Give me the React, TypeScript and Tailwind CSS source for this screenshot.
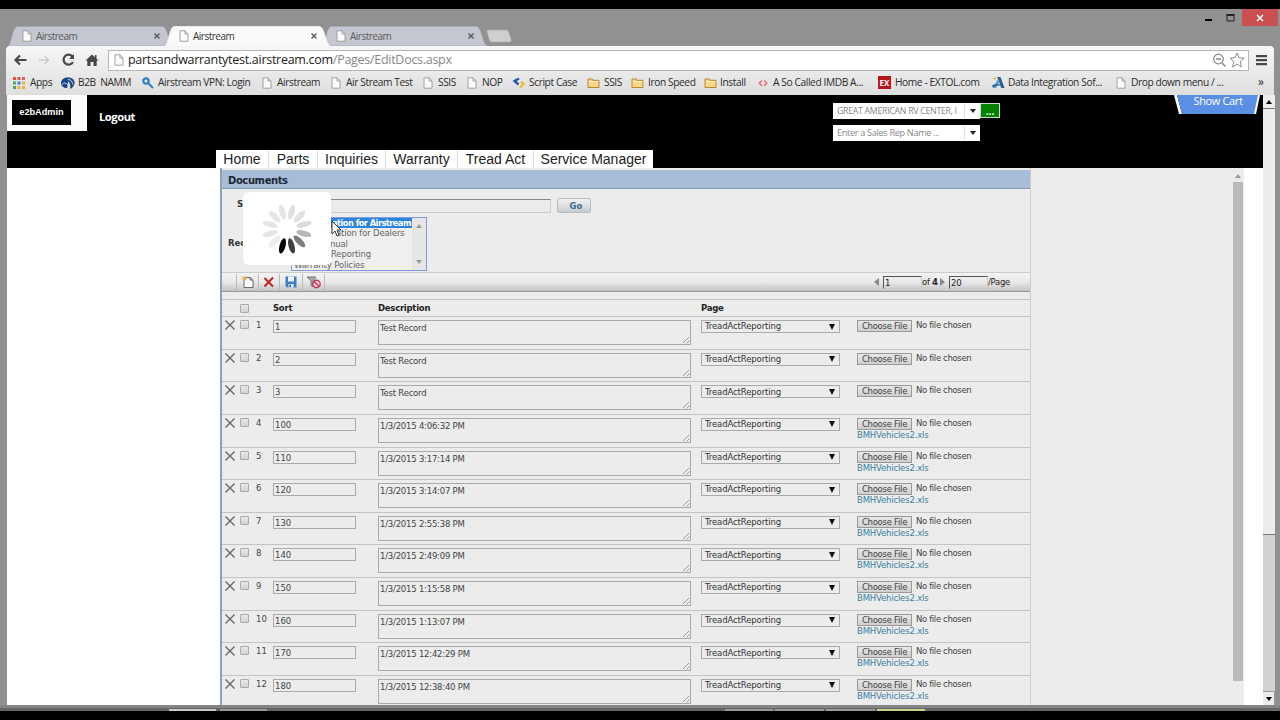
import { ReactNode } from "react";

const UI = "font-['Open_Sans','Noto_Sans',sans-serif]";
const ARIAL = "font-['Liberation_Sans',Arial,sans-serif]";
const VERDANA = "font-['DejaVu_Sans',Verdana,sans-serif]";

const PageIcon = () => (
  <svg viewBox="0 0 10 12" className="h-3 w-2.5 shrink-0">
    <path d="M1 .8h5L9 4v7.2H1z" fill="#fafafa" stroke="#999" strokeWidth=".9" />
    <path d="M6 .8V4h3" fill="none" stroke="#999" strokeWidth=".9" />
  </svg>
);

const FolderIcon = () => (
  <svg viewBox="0 0 13 12" className="h-3 w-[13px]">
    <path d="M1 10.5V2h4.5v1.3H12v7.2z" fill="#fbd588" stroke="#b98732" />
    <path d="M2 4.5h9.3" stroke="#fff0c6" />
  </svg>
);

const AppsIcon = () => (
  <svg viewBox="0 0 12 12" className="size-3">
    <path d="M0 0h3v3H0z" fill="#e2504b" />
    <path d="M4.5 0h3v3h-3z" fill="#e2504b" />
    <path d="M9 0h3v3H9z" fill="#e0645c" />
    <path d="M0 4.5h3v3H0z" fill="#4fa65b" />
    <path d="M4.5 4.5h3v3h-3z" fill="#3c83dd" />
    <path d="M9 4.5h3v3H9z" fill="#eeb63a" />
    <path d="M0 9h3v3H0z" fill="#4fa65b" />
    <path d="M4.5 9h3v3h-3z" fill="#eeb63a" />
    <path d="M9 9h3v3H9z" fill="#eeb63a" />
  </svg>
);

const NammIcon = () => (
  <svg viewBox="0 0 14 12" className="h-3 w-3.5">
    <path d="M0 6C0 2 4 0 8 .5c4 .5 6 3 5.500 6C13 9 11 11.500 9 12c1-3 0-6-2-8 0 3-.5 5-1 7C3 11 0 9 0 6z" fill="#1c4687" />
    <path d="M1 7.500c2-2 4-2 6 .5M7 2.500c3 0 4.500 2 4.500 5" fill="none" stroke="#e6eefa" strokeWidth=".9" />
  </svg>
);

const KeyIcon = () => (
  <svg viewBox="0 0 12 12" className="size-3">
    <circle cx="4" cy="4" r="2.7" fill="none" stroke="#2f7fc2" strokeWidth="2.2" />
    <path d="M6 6l5 5M8 9.5L9.5 8" stroke="#2f7fc2" strokeWidth="2" />
  </svg>
);

const ScriptCaseIcon = () => (
  <svg viewBox="0 0 13 12" className="h-3 w-[13px]">
    <path d="M6 1.500L1.500 4 5.500 7.500" fill="none" stroke="#2459a8" strokeWidth="2.4" />
    <path d="M8 4.500L10.500 7 7 10.500" fill="none" stroke="#edbd38" strokeWidth="2.4" />
  </svg>
);

const CodeIcon = () => (
  <svg viewBox="0 0 10 12" className="h-3 w-2.5">
    <path d="M4 3.5L1.3 6.2 4 9M6 3.5l2.7 2.7L6 9" fill="none" stroke="#e2747c" strokeWidth="1.7" />
  </svg>
);

const ExtolIcon = () => (
  <span className="flex size-[13px] items-center justify-center bg-[#b3171c] text-[8px] font-bold leading-none text-white">
    EX
  </span>
);

const IntegrationIcon = () => (
  <svg viewBox="0 0 13 13" className="size-[13px]">
    <path d="M5 1h3.5l4 11H9.2L6.5 4z" fill="#245f8d" />
    <path d="M5.5 3l-4 9H4l3-6z" fill="#4aa3c7" />
    <path d="M0 9.5c3-2 7-1.500 9-1l.5 1.500C6 9 3 10 1 12z" fill="#2d6b99" />
    <path d="M1 2l3-.5-1 3z" fill="#f0a531" />
  </svg>
);

const bookmarks: { label: string; icon: ReactNode; width: string; gap: string }[] = [
  { label: "Apps", icon: <AppsIcon />, width: "w-[48px]", gap: "w-[17px]" },
  { label: "B2B  NAMM", icon: <NammIcon />, width: "w-[81px]", gap: "w-[17px]" },
  { label: "Airstream VPN: Login", icon: <KeyIcon />, width: "w-[120px]", gap: "w-[16px]" },
  { label: "Airstream", icon: <PageIcon />, width: "w-[69px]", gap: "w-[15px]" },
  { label: "Air Stream Test", icon: <PageIcon />, width: "w-[92px]", gap: "w-[15px]" },
  { label: "SSIS", icon: <PageIcon />, width: "w-[44px]", gap: "w-[15px]" },
  { label: "NOP", icon: <PageIcon />, width: "w-[46px]", gap: "w-[15px]" },
  { label: "Script Case", icon: <ScriptCaseIcon />, width: "w-[74px]", gap: "w-[16px]" },
  { label: "SSIS", icon: <FolderIcon />, width: "w-[44px]", gap: "w-[17px]" },
  { label: "Iron Speed", icon: <FolderIcon />, width: "w-[73px]", gap: "w-[17px]" },
  { label: "Install", icon: <FolderIcon />, width: "w-[54px]", gap: "w-[16px]" },
  { label: "A So Called IMDB A...", icon: <CodeIcon />, width: "w-[120px]", gap: "w-[15px]" },
  { label: "Home - EXTOL.com", icon: <ExtolIcon />, width: "w-[114px]", gap: "w-[17px]" },
  { label: "Data Integration Sof...", icon: <IntegrationIcon />, width: "w-[124px]", gap: "w-[16px]" },
  { label: "Drop down menu / ...", icon: <PageIcon />, width: "w-[140px]", gap: "w-[15px]" },
];

const BrowserTab = ({ active }: { active?: boolean }) => (
  <div className={`relative -mr-2 h-5 w-[165px] shrink-0 ${active ? "z-10" : ""}`}>
    <svg viewBox="0 0 165 20" className="absolute inset-0 h-full w-full">
      <path
        d="M0 20C4 18 4 2 9 .5H154C160 .5 160 17 165 20z"
        fill={active ? "#fafafa" : "#c5c7d0"}
        stroke={active ? "#f5f5f5" : "#a9abb2"}
        strokeWidth=".8"
      />
    </svg>
    <div className="relative flex h-full items-center pl-3.5">
      <PageIcon />
      <span
        className={`ml-1 flex-1 text-[10px] leading-none tracking-[-0.5px] ${active ? "text-[#333]" : "text-[#5a5a5a]"}`}
      >
        Airstream
      </span>
      <svg viewBox="0 0 6 6" className="mr-[13px] size-1.5">
        <path d="M.5 .5l5 5M5.500 .5l-5 5" stroke="#555" strokeWidth="1.3" />
      </svg>
    </div>
  </div>
);

const Browser = () => (
  <div className={UI}>
    <div className="flex h-[37px] items-end bg-[#919191] pl-2">
      <BrowserTab />
      <BrowserTab active />
      <BrowserTab />
      <svg viewBox="0 0 26 14" className="mb-[3px] ml-[7px] h-3.5 w-[26px]">
        <path
          d="M3 1h17c2 0 2 1 3 3l2 6c.5 2 0 3-2 3H6c-2 0-2-1-3-3L1 3C.5 2 1 1 3 1z"
          fill="#cfcfcf"
          stroke="#aaa"
          strokeWidth=".7"
        />
      </svg>
      <div className="ml-auto mr-0.5 flex h-[37px] items-start">
        <svg viewBox="0 0 40 16" className="h-4 w-10">
          <path d="M3 10h7v2H3z" />
          <path d="M25 6h7v6h-7z" fill="none" stroke="#222" />
          <path d="M24.5 6h8" stroke="#222" strokeWidth="2" />
        </svg>
        <div className="flex h-[17px] w-9 items-center justify-center bg-[#c94f50]">
          <svg viewBox="0 0 8 8" className="size-2">
            <path d="M1 1l6 6M7 1L1 7" stroke="#fff" strokeWidth="1.5" />
          </svg>
        </div>
      </div>
    </div>
    <div className="mx-1.5 h-[49px] rounded-t-sm bg-gradient-to-b from-[#f7f7f7] to-[#dedede]">
      <div className="flex h-[26px] items-center pt-0.5">
        <svg viewBox="0 0 96 16" className="ml-1.5 h-4 w-24" fill="none" stroke="#484848" strokeWidth="2.2">
          <path d="M14.5 8H4M8 3.5L3.5 8 8 12.5" />
          <path d="M27 8h9M32.5 4l4 4-4 4" stroke="#c9c9c9" strokeWidth="1.5" />
          <path d="M60.5 4.5A5 5 0 1 0 61 10" />
          <path d="M62 2v5h-5z" fill="#484848" stroke="none" />
          <path
            d="M80 2.5l-6.500 6h1.800V14h3.200v-4h3v4h3.200V8.500h1.800l-2-2V3H83v2.300z"
            fill="#484848"
            stroke="none"
          />
        </svg>
        <div className="flex h-[21px] w-[1141px] items-center border border-[#b5b5b5] bg-white pl-[5px]">
          <PageIcon />
          <span className="ml-1 text-[12.5px] leading-none tracking-[-0.28px] text-[#222]">
            partsandwarrantytest.airstream.com<span className="text-[#888]">/Pages/EditDocs.aspx</span>
          </span>
          <svg viewBox="0 0 34 16" className="ml-auto mr-0.5 h-4 w-[34px]" fill="none" stroke="#8b8b8b">
            <circle cx="6.5" cy="7" r="4.800" strokeWidth="1.3" />
            <path d="M4 7h5M10 11l3.500 3.500" strokeWidth="1.5" />
            <path d="M25 1l2 4.700 5 .4-3.800 3.400L29.400 15 25 12l-4.400 3 1.200-5.500L18 6.100l5-.4z" />
          </svg>
        </div>
        <svg viewBox="0 0 12 12" className="ml-[7px] size-3">
          <path d="M0 1h11v2.200H0zM0 5h11v2.200H0zM0 9h11v2.200H0z" fill="#484848" />
        </svg>
      </div>
      <div className="flex h-[21px] items-center pl-[7px] text-[10.2px] leading-none text-[#2c2c2c]">
        {bookmarks.map((b, i) => (
          <div key={i} className={`flex shrink-0 items-center whitespace-pre ${b.width}`}>
            <span className={`shrink-0 ${b.gap}`}>{b.icon}</span>
            <span className="tracking-[-0.4px]">{b.label}</span>
          </div>
        ))}
        <span className="pb-0.5 pl-0.5 text-[12px]">»</span>
      </div>
    </div>
  </div>
);

const Caret = ({ className = "" }: { className?: string }) => (
  <svg viewBox="0 0 6 4" className={`h-1 w-1.5 ${className}`}>
    <path d="M0 0h6L3 4z" fill="currentColor" />
  </svg>
);

const Combo = ({ text, className }: { text: string; className: string }) => (
  <div className="flex h-4 w-[147px] items-center bg-white text-[#888]">
    <span className={`w-[132px] whitespace-nowrap border-r border-[#ddd] pl-1 ${className}`}>{text}</span>
    <Caret className="mx-auto text-[#222]" />
  </div>
);

const navItems = [
  { label: "Home", width: "w-[53px]" },
  { label: "Parts", width: "w-[49px]" },
  { label: "Inquiries", width: "w-[68px]" },
  { label: "Warranty", width: "w-[72px]" },
  { label: "Tread Act", width: "w-[76px]" },
  { label: "Service Manager", width: "w-[119px]" },
];

const SiteHeader = () => (
  <div className={`h-[73px] bg-black text-white ${ARIAL}`}>
    <div className="flex h-[55px]">
      <div className="h-9 w-20 bg-[#fcfcfc] pl-[5px] pt-[5px]">
        <div className="flex h-[25px] w-[59px] items-center justify-center bg-black text-[9.2px] font-bold">e2bAdmin</div>
      </div>
      <div className={`ml-3 mt-[15px] w-[734px] text-[11.2px] font-bold leading-[13px] tracking-[-0.45px] ${UI}`}>
        Logout
      </div>
      <div className={`flex flex-col gap-[6px] pt-2 leading-[14px] ${UI}`}>
        <div className="flex">
          <Combo text="GREAT AMERICAN RV CENTER, I" className="text-[8.8px] tracking-[-0.3px]" />
          <div className="flex h-[15px] w-5 items-center justify-center border border-[#c8e0c8] bg-[#048204] text-[10px] font-bold">
            ...
          </div>
        </div>
        <Combo text="Enter a Sales Rep Name ..." className="text-[9.1px] tracking-[-0.3px]" />
      </div>
      <div className="relative ml-auto mr-px h-[19px] w-[88px] text-[11px] tracking-[-0.35px]">
        <svg viewBox="0 0 88 19" className="absolute inset-0 h-full w-full">
          <path d="M0 0h3l5 19H5z" fill="#fff" />
          <path d="M3 0h82l-4 19H8z" fill="#5b8fe6" />
          <path d="M84 0h2l-4 19h-2z" fill="#fff" />
        </svg>
        <span className={`relative block text-center leading-[12px] ${UI}`}>Show Cart</span>
      </div>
    </div>
    <div className="ml-[209px] flex w-[437px] bg-white text-[14px] leading-[18px] text-[#222]">
      {navItems.map((n) => (
        <div key={n.label} className={`border-r border-[#ddd] text-center last:border-0 ${n.width}`}>
          {n.label}
        </div>
      ))}
    </div>
  </div>
);

// opacity of each spoke, clockwise from one o'clock
const SPOKES = [0.12, 0.12, 0.14, 0.28, 0.5, 0.75, 0.98, 0.08, 0.1, 0.1, 0.1, 0.1];

const Spinner = () => (
  <div className="absolute left-[21px] top-[24px] flex h-[73px] w-[88px] items-center justify-center rounded-md bg-white">
    <svg viewBox="-27 -27 54 54" className="size-[54px]">
      {SPOKES.map((o, i) => (
        <ellipse key={i} cy="-17.5" rx="3" ry="7.800" fillOpacity={o} transform={`rotate(${15 + i * 30})`} />
      ))}
    </svg>
  </div>
);

const Cursor = () => (
  <svg viewBox="0 0 11 17" className="absolute left-[109px] top-[52px] h-[17px] w-[11px]">
    <path d="M1 1v13l3-3 2 5 2-1-2-5h4z" fill="#fff" stroke="#222" strokeWidth=".9" />
  </svg>
);

const records = [
  { label: "ation for Dealers", indent: "pl-[44px]" },
  { label: "nual", indent: "pl-[38px]" },
  { label: "Reporting", indent: "pl-[39px]" },
  { label: "Warranty Policies", indent: "pl-[2px]" },
];

const Filters = () => (
  <div className="h-[83px] text-[#333]">
    <div className="flex h-[27px] items-center">
      <span className="w-[69px] pl-[15px] pt-1 font-bold">S</span>
      <div className="mt-1.5 h-3.5 w-[260px] border border-[#ccc] border-t-[#888] bg-[#ebebeb]" />
      <button className="ml-1.5 mt-1.5 h-[15px] w-[34px] rounded-xs border border-[#bbb] bg-gradient-to-b from-[#f2f2f2] to-[#c9cccf] pl-1 text-[8.5px] font-bold leading-[14px] text-[#3a6d92]">
        Go
      </button>
    </div>
    <div className="flex h-[55px] items-center">
      <span className="w-[69px] pl-[6px] font-bold">Rec</span>
      <div className="flex h-[54px] w-[136px] border border-[#7f9be0] bg-[#efefef]">
        <div className="w-[120px] text-[8.5px] leading-[10.6px] text-[#666]">
          <div className="bg-[#2a84dc] pr-px text-right text-[8.3px] font-bold tracking-[-0.55px] text-white">
            ation for Airstream
          </div>
          {records.map((r) => (
            <div key={r.label} className={`whitespace-nowrap tracking-[-0.15px] ${r.indent}`}>
              {r.label}
            </div>
          ))}
        </div>
        <div className="flex flex-1 flex-col items-center justify-between bg-[#e6e6e6] py-1.5 text-[#999]">
          <Caret className="rotate-180" />
          <Caret />
        </div>
      </div>
    </div>
  </div>
);

const Divider = () => <span className="h-4 w-px bg-[#bbb]" />;

const Toolbar = () => (
  <div className="flex h-5 items-center border-b border-t border-b-[#999] border-t-[#ccc] bg-gradient-to-b from-[#f3f3f3] via-[#e9e9e9] to-[#c4c4c4] pl-[14px]">
    <Divider />
    <svg viewBox="0 0 12 12" className="ml-[5px] mr-1 size-3">
      <path d="M2 1.500h6L11 4v7.500H2z" fill="#fff" stroke="#666" />
      <path d="M8 1.500V4h3" fill="none" stroke="#666" />
      <circle cx="2.5" cy="2.5" r="2.2" fill="#eab35a" />
    </svg>
    <Divider />
    <svg viewBox="0 0 12 12" className="mx-1 size-3">
      <path d="M1.500 2l8.500 8.500M10 1.500l-8.500 9" stroke="#c02020" strokeWidth="1.9" />
    </svg>
    <Divider />
    <svg viewBox="0 0 12 12" className="mx-[5px] size-3">
      <path d="M.5 .5h11v11H2L.5 10z" fill="#3e7cc4" />
      <path d="M3 .5h6v5H3zM3.500 8h5v3.500h-5z" fill="#edf3fa" />
      <path d="M4.500 8.500H6V11H4.500z" fill="#29568c" />
    </svg>
    <Divider />
    <svg viewBox="0 0 15 13" className="mx-[3px] h-[13px] w-[15px]">
      <path d="M1 1h9L7 5v6L5 9.500V5z" fill="#aaa" stroke="#777" />
      <circle cx="10.5" cy="8" r="3.700" fill="#f5d5dd" stroke="#c2355b" strokeWidth="1.4" />
      <path d="M8 5.500l5 5" stroke="#c2355b" strokeWidth="1.4" />
    </svg>
    <Divider />
    <div className="ml-auto mr-5 flex items-center text-[8.5px] tracking-[-0.3px] text-[#222]">
      <svg viewBox="0 0 5 8" className="h-2 w-[5px]">
        <path d="M5 0v8L0 4z" fill="#888" />
      </svg>
      <span className="ml-1 h-[13px] w-[39px] border border-[#ccc] border-l-[#555] border-t-[#555] pl-px leading-[13px]">1</span>
      <span className="w-[18px] whitespace-nowrap">
        of <b>4</b>
      </span>
      <svg viewBox="0 0 5 8" className="h-2 w-[5px]">
        <path d="M0 0v8l5-4z" fill="#888" />
      </svg>
      <span className="ml-1 h-[13px] w-[39px] border border-[#ccc] border-l-[#555] border-t-[#555] pl-px leading-[13px]">20</span>
      <span>/Page</span>
    </div>
  </div>
);

const rows = [
  ["1", "Test Record"],
  ["2", "Test Record"],
  ["3", "Test Record"],
  ["100", "1/3/2015 4:06:32 PM"],
  ["110", "1/3/2015 3:17:14 PM"],
  ["120", "1/3/2015 3:14:07 PM"],
  ["130", "1/3/2015 2:55:38 PM"],
  ["140", "1/3/2015 2:49:09 PM"],
  ["150", "1/3/2015 1:15:58 PM"],
  ["160", "1/3/2015 1:13:07 PM"],
  ["170", "1/3/2015 12:42:29 PM"],
  ["180", "1/3/2015 12:38:40 PM"],
];

const Checkbox = () => (
  <span className="block size-[9px] rounded-[1px] border border-[#aaa] bg-gradient-to-b from-[#e8e8e8] to-[#d2d2d2]" />
);

const COLS = "grid grid-cols-[18px_16px_17px_105px_323px_156px_1fr]";

const DocumentRow = ({ index, sort, text }: { index: number; sort: string; text: string }) => (
  <div className={`h-[32.64px] border-t border-[#c4c4c4] pt-[3px] text-[#444] ${COLS}`}>
    <svg viewBox="0 0 10 10" className="ml-[3px] size-2.5">
      <path d="M.5 .5l9 9M9.500 .5l-9 9" stroke="#666" strokeWidth="1.4" />
    </svg>
    <Checkbox />
    <span className="leading-[11px]">{index}</span>
    <div className="h-[13px] w-[83px] border border-[#aaa] pl-px leading-[13px]">{sort}</div>
    <div className="relative h-[25px] w-[313px] border border-[#aaa] pl-px pt-0.5 leading-[11px] tracking-[-0.22px]">
      {text}
      <svg viewBox="0 0 8 8" className="absolute bottom-0 right-0 size-2">
        <path d="M1 7l6-6M4.500 7.500l3-3" stroke="#888" strokeWidth=".8" />
      </svg>
    </div>
    <div className="flex h-[13px] w-[139px] items-center justify-between border border-[#aaa] pl-[3px] pr-[4px] leading-none tracking-[-0.12px] text-[#333]">
      <span>TreadActReporting</span>
      <svg viewBox="0 0 6 6" className="size-1.5">
        <path d="M0 0h6L3 6z" fill="#111" />
      </svg>
    </div>
    <div>
      <div className="flex gap-1">
        <button className="h-3 w-[55px] whitespace-nowrap border border-[#999] bg-gradient-to-b from-[#e8e8e8] to-[#cfcfcf] leading-[10px] tracking-[-0.28px]">
          Choose File
        </button>
        <span className="leading-[11px] tracking-[-0.35px]">No file chosen</span>
      </div>
      {index > 3 && <a className="block leading-[10px] tracking-[-0.18px] text-[#3a7f9f]">BMHVehicles2.xls</a>}
    </div>
  </div>
);

const Documents = () => (
  <div
    className={`relative h-full w-[811px] overflow-hidden border-l-2 border-r border-l-[#8aa5ad] border-r-[#ccc] bg-[#ececec] text-[8.5px] ${VERDANA}`}
  >
    <div className="mt-0.5 h-[19px] border-b border-[#8a9ab0] bg-[#a6bcd9] pl-1.5 text-[10px] font-bold leading-[21px] tracking-[-0.4px] text-[#1c2836]">
      Documents
    </div>
    <Filters />
    <Toolbar />
    <div className="h-[7px]" />
    <div className={`h-[17px] items-center border-t border-[#c4c4c4] font-bold tracking-[-0.25px] text-[#222] ${COLS}`}>
      <span />
      <Checkbox />
      <span />
      <span>Sort</span>
      <span>Description</span>
      <span>Page</span>
    </div>
    {rows.map(([sort, text], i) => (
      <DocumentRow key={sort} index={i + 1} sort={sort} text={text} />
    ))}
    <Spinner />
    <Cursor />
  </div>
);

const OuterScrollbar = () => (
  <div className="flex w-3 flex-col bg-[#d2d2d2] text-black">
    <div className="flex h-[14px] items-center justify-center border-b border-[#777] bg-[#ececec]">
      <Caret className="rotate-180" />
    </div>
    <div className="h-[426px] border-b border-[#777] bg-[#ececec]" />
    <div className="mt-auto flex h-[14px] items-center justify-center border-r border-t border-[#999] bg-[#ececec]">
      <Caret />
    </div>
  </div>
);

const slivers = [
  "ml-[169px] w-[47px] bg-[#c9c9c9]",
  "ml-1 w-[47px] bg-[#9a9a9a]",
  "ml-[458px] w-12 bg-[#9a9a9a]",
  "ml-0.5 w-[49px] bg-[#9a9a9a]",
  "ml-0.5 w-[49px] bg-[#9a9a9a]",
  "ml-0.5 w-[48px] bg-[#cfd28c]",
];

export default function App() {
  return (
    <div className="h-[720px] w-[1280px] overflow-hidden bg-black pt-[9px]">
      <div className="h-[702px] bg-[#919191]">
        <Browser />
        <div className="ml-[7px] flex h-[610px] w-[1268px]">
          <div className="w-[1256px] bg-white">
            <SiteHeader />
            <div className="flex h-[537px]">
              <div className="w-[213px]" />
              <Documents />
              <div className="flex w-[213px] justify-end bg-[#ececec] pr-px">
                <div className="flex w-2.5 flex-col items-center pt-1.5 text-[#999]">
                  <Caret className="rotate-180" />
                  <div className="mt-1 h-[499px] w-full bg-[#b9b9b9]" />
                </div>
              </div>
            </div>
          </div>
          <OuterScrollbar />
        </div>
        <div className="flex h-1.5 items-end bg-[#858585]">
          <div className="flex h-[3px] w-full items-end bg-[#666]">
            {slivers.map((s, i) => (
              <span key={i} className={`h-0.5 ${s}`} />
            ))}
          </div>
        </div>
      </div>
    </div>
  );
}
